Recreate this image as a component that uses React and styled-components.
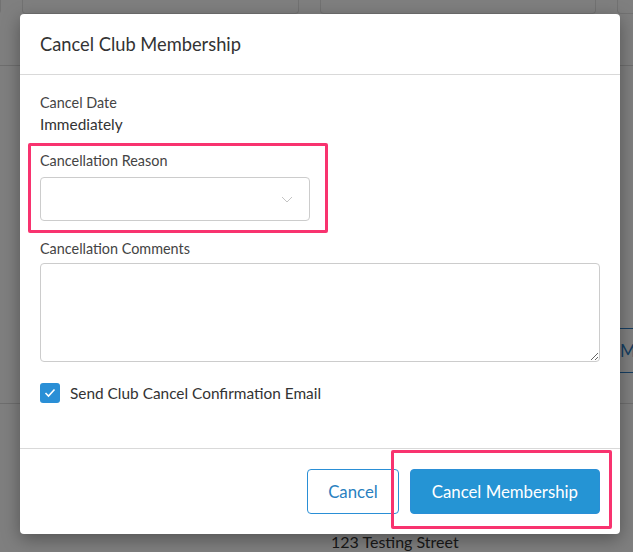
import React from 'react';
import styled, { createGlobalStyle } from 'styled-components';

const GlobalStyle = createGlobalStyle`
  html, body {
    margin: 0;
    padding: 0;
    background: #fff;
    font-family: Lato, "Liberation Sans", sans-serif;
    overflow: hidden;
  }
`;

const Page = styled.div`
  position: relative;
  width: 633px;
  height: 552px;
  overflow: hidden;
  background: #fff;
`;

const TopCards = styled.div`
  display: grid;
  grid-template-columns: 11px 277px 276px 30px;
  column-gap: 21px;
  margin-left: -10px;
`;

const TopCard = styled.div`
  height: 13px;
  border: 1px solid #e4e4e4;
  border-top: none;
  border-radius: 0 0 4px 4px;
`;

const Rule = styled.div`
  height: 1px;
  background: #dcdcdc;
  margin-top: ${p => p.$gap}px;
`;

const SideButton = styled.div`
  margin: 262px 0 0 590px;
  height: 43px;
  border-top: 1px solid #2d7dc4;
  border-bottom: 1px solid #2d7dc4;
  display: flex;
  align-items: center;
  padding-left: 30px;
  font-size: 17px;
  color: #2d7dc4;
  white-space: nowrap;
`;

const BottomRow = styled.div`
  margin: 128px 0 0 331px;
  font-size: 16px;
  color: #333;
  white-space: nowrap;
`;

const Overlay = styled.div`
  position: absolute;
  inset: 0;
  background: rgba(0, 0, 0, 0.5);
`;

const Modal = styled.div`
  position: absolute;
  top: 14px;
  left: 20px;
  width: 600px;
  background: #fff;
  border-radius: 4px;
  box-shadow: 0 5px 18px rgba(0, 0, 0, 0.35);
`;

const Header = styled.div`
  height: 60px;
  display: flex;
  align-items: center;
  padding: 0 20px;
  border-bottom: 1px solid #d9d9d9;
`;

const Title = styled.h4`
  margin: 0;
  font-size: 18.3px;
  font-weight: 400;
  color: #333;
`;

const Body = styled.div`
  padding: 18px 20px 45px;
  display: flex;
  flex-direction: column;
`;

const Label = styled.div`
  font-size: 14.4px;
  line-height: 20px;
  color: #444;
`;

const Value = styled.div`
  font-size: 15.4px;
  line-height: 20px;
  color: #333;
  margin-top: 1px;
`;

const Group = styled.div`
  display: flex;
  flex-direction: column;
  gap: ${p => p.$gap}px;
  margin-top: ${p => p.$top}px;
`;

const Highlight = styled.div`
  position: relative;
  &::after {
    content: '';
    position: absolute;
    top: ${p => p.$t}px;
    left: ${p => p.$l}px;
    right: ${p => p.$r}px;
    bottom: ${p => p.$b}px;
    border: 3px solid #f8336f;
    border-radius: 2px;
    pointer-events: none;
  }
`;

const ReasonField = styled(Highlight)`
  margin-top: 17px;
  width: 270px;
`;

const Select = styled.div`
  box-sizing: border-box;
  height: 44px;
  border: 1px solid #ccc;
  border-radius: 4px;
  display: flex;
  align-items: center;
  justify-content: flex-end;
  padding-right: 16px;
`;

const TextArea = styled.textarea`
  box-sizing: border-box;
  display: block;
  width: 560px;
  height: 99px;
  border: 1px solid #ccc;
  border-radius: 4px;
  resize: vertical;
  font-family: inherit;
  margin: 0;
`;

const CheckRow = styled.label`
  display: flex;
  align-items: center;
  gap: 10px;
  margin-top: 21px;
  font-size: 15.4px;
  color: #333;
`;

const Box = styled.span`
  width: 20px;
  height: 20px;
  border-radius: 3px;
  background: #2a8fd6;
  display: flex;
  align-items: center;
  justify-content: center;
`;

const Footer = styled.div`
  border-top: 1px solid #d9d9d9;
  display: flex;
  justify-content: flex-end;
  gap: 11px;
  padding: 20px 20px 20px;
`;

const Button = styled.button`
  box-sizing: border-box;
  height: 45px;
  padding: 0 ${p => (p.$primary ? 21 : 20)}px;
  border-radius: 4px;
  font-family: inherit;
  font-size: 16.8px;
  border: 1px solid #2a8fd6;
  background: ${p => (p.$primary ? '#2594d4' : '#fff')};
  color: ${p => (p.$primary ? '#fff' : '#2a7fbf')};
  cursor: pointer;
`;

const Chevron = () => (
  <svg width="12" height="7" viewBox="0 0 12 7">
    <polyline points="1,1 6,6 11,1" fill="none" stroke="#c4c4c4" strokeWidth="1" />
  </svg>
);

const Check = () => (
  <svg width="12" height="10" viewBox="0 0 12 10">
    <polyline points="1.5,5 4.5,8 10.5,1.5" fill="none" stroke="#fff" strokeWidth="1.6" />
  </svg>
);

export default function App() {
  return (
    <>
      <GlobalStyle />
      <Page>
        <TopCards>
          <TopCard />
          <TopCard />
          <TopCard />
          <TopCard />
        </TopCards>
        <Rule $gap={51} />
        <SideButton>Me</SideButton>
        <Rule $gap={30} />
        <BottomRow>123 Testing Street</BottomRow>
        <Overlay />
        <Modal>
          <Header>
            <Title>Cancel Club Membership</Title>
          </Header>
          <Body>
            <Label>Cancel Date</Label>
            <Value>Immediately</Value>
            <ReasonField $t={-8} $l={-12} $r={-18} $b={-12}>
              <Group $gap={6} $top={0}>
                <Label>Cancellation Reason</Label>
                <Select>
                  <Chevron />
                </Select>
              </Group>
            </ReasonField>
            <Group $gap={4} $top={18}>
              <Label>Cancellation Comments</Label>
              <TextArea />
            </Group>
            <CheckRow>
              <Box>
                <Check />
              </Box>
              Send Club Cancel Confirmation Email
            </CheckRow>
          </Body>
          <Footer>
            <Button>Cancel</Button>
            <Highlight $t={-19} $l={-19} $r={-12} $b={-15}>
              <Button $primary>Cancel Membership</Button>
            </Highlight>
          </Footer>
        </Modal>
      </Page>
    </>
  );
}
